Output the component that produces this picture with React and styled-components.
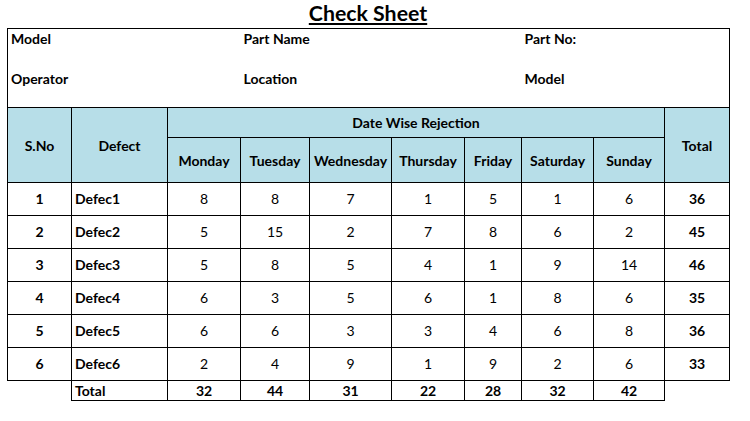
import React from "react";
import styled, { createGlobalStyle } from "styled-components";

const Global = createGlobalStyle`
  html, body { margin: 0; padding: 0; background: #fff; }
  body { font-family: Lato, "Open Sans", sans-serif; color: #000; }
`;

const Page = styled.div`
  padding: 0 0 0 7px;
  width: 722px;
`;

const Title = styled.div`
  height: 28px;
  line-height: 26px;
  text-align: center;
  font-size: 21.3px;
  font-weight: 700;
  span {
    text-decoration: underline;
    text-decoration-thickness: 2px;
    text-underline-offset: 2px;
  }
`;

const Sheet = styled.table`
  border-collapse: collapse;
  table-layout: fixed;
  width: 722px;
  font-size: 14px;
`;

const InfoRow = styled.tr`
  height: ${(p) => p.$h || 20}px;
`;

const InfoCell = styled.td`
  padding: 0 3px;
  font-weight: 700;
  line-height: 18px;
  border-left: ${(p) => (p.$first ? "1px solid #000" : "none")};
  border-right: ${(p) => (p.$last ? "1px solid #000" : "none")};
  border-top: ${(p) => (p.$top ? "1px solid #000" : "none")};
  white-space: nowrap;
`;

const HeadRow = styled.tr`
  height: ${(p) => p.$h}px;
`;

const HeadCell = styled.th`
  background: #b7dee8;
  border: 1px solid #000;
  font-weight: 700;
  text-align: center;
  vertical-align: middle;
  padding: 0;
  white-space: nowrap;
`;

const BodyRow = styled.tr`
  height: ${(p) => p.$h}px;
`;

const Cell = styled.td`
  border: ${(p) => (p.$blank ? "none" : "1px solid #000")};
  font-weight: ${(p) => (p.$bold ? 700 : 400)};
  text-align: ${(p) => p.$align || "center"};
  vertical-align: middle;
  padding: 0 3px;
  line-height: 18px;
  white-space: nowrap;
`;

const widths = [64, 96, 73, 69, 82, 73, 57, 72, 71, 65];
const days = ["Monday", "Tuesday", "Wednesday", "Thursday", "Friday", "Saturday", "Sunday"];
const rows = [
  ["Defec1", [8, 8, 7, 1, 5, 1, 6], 36],
  ["Defec2", [5, 15, 2, 7, 8, 6, 2], 45],
  ["Defec3", [5, 8, 5, 4, 1, 9, 14], 46],
  ["Defec4", [6, 3, 5, 6, 1, 8, 6], 35],
  ["Defec5", [6, 6, 3, 3, 4, 6, 8], 36],
  ["Defec6", [2, 4, 9, 1, 9, 2, 6], 33],
];
const totals = [32, 44, 31, 22, 28, 32, 42];

export default function App() {
  return (
    <Page>
      <Global />
      <Title>
        <span>Check Sheet</span>
      </Title>
      <Sheet>
        <colgroup>
          {widths.map((w, i) => (
            <col key={i} style={{ width: w }} />
          ))}
        </colgroup>
        <tbody>
          <InfoRow $h={21}>
            <InfoCell colSpan={3} $first $top>Model</InfoCell>
            <InfoCell colSpan={4} $top>Part Name</InfoCell>
            <InfoCell colSpan={3} $last $top>Part No:</InfoCell>
          </InfoRow>
          <InfoRow $h={19}>
            <InfoCell colSpan={3} $first />
            <InfoCell colSpan={4} />
            <InfoCell colSpan={3} $last />
          </InfoRow>
          <InfoRow $h={21}>
            <InfoCell colSpan={3} $first>Operator</InfoCell>
            <InfoCell colSpan={4}>Location</InfoCell>
            <InfoCell colSpan={3} $last>Model</InfoCell>
          </InfoRow>
          <InfoRow $h={18}>
            <InfoCell colSpan={3} $first />
            <InfoCell colSpan={4} />
            <InfoCell colSpan={3} $last />
          </InfoRow>
          <HeadRow $h={30}>
            <HeadCell rowSpan={2}>S.No</HeadCell>
            <HeadCell rowSpan={2}>Defect</HeadCell>
            <HeadCell colSpan={7}>Date Wise Rejection</HeadCell>
            <HeadCell rowSpan={2}>Total</HeadCell>
          </HeadRow>
          <HeadRow $h={45}>
            {days.map((d) => (
              <HeadCell key={d}>{d}</HeadCell>
            ))}
          </HeadRow>
          {rows.map(([name, vals, total], i) => (
            <BodyRow key={name} $h={33}>
              <Cell $bold>{i + 1}</Cell>
              <Cell $bold $align="left">{name}</Cell>
              {vals.map((v, j) => (
                <Cell key={j}>{v}</Cell>
              ))}
              <Cell $bold>{total}</Cell>
            </BodyRow>
          ))}
          <BodyRow $h={20}>
            <Cell $blank />
            <Cell $bold $align="left">Total</Cell>
            {totals.map((t, j) => (
              <Cell key={j} $bold>{t}</Cell>
            ))}
            <Cell $blank />
          </BodyRow>
        </tbody>
      </Sheet>
    </Page>
  );
}
